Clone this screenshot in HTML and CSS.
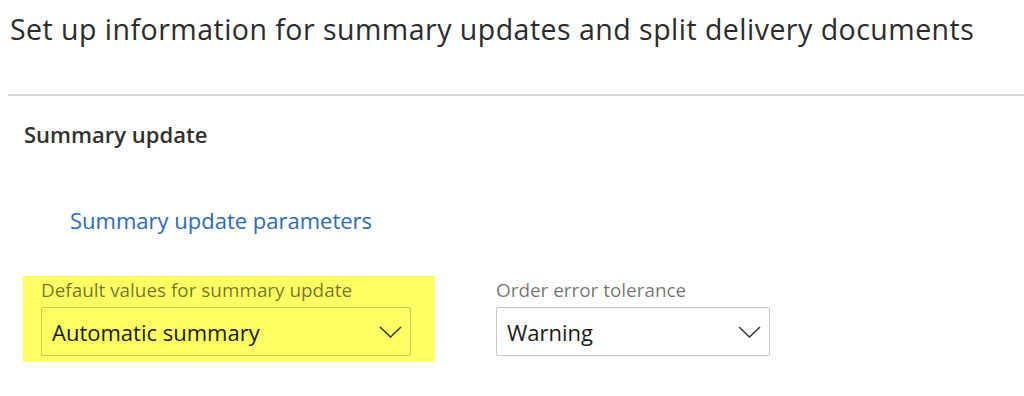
FILE: index.html
```html
<!DOCTYPE html>
<html lang="en">
<head>
<meta charset="utf-8">
<title>Summary update setup</title>
<link rel="stylesheet" href="styles.css">
</head>
<body>
<div class="page">
  <h1 class="title">Set up information for summary updates and split delivery documents</h1>
  <div class="rule"></div>
  <section class="section">
    <h2 class="section-title">Summary update</h2>
    <a class="link" href="#">Summary update parameters</a>
    <div class="fields">
      <div class="field highlight">
        <div class="label">Default values for summary update</div>
        <div class="select select-wide">
          <span class="value">Automatic summary</span>
          <svg class="chev" width="23" height="12" viewBox="0 0 23 12"><path d="M1 1 L11.5 11 L22 1" fill="none" stroke="currentColor" stroke-width="1.5"/></svg>
        </div>
      </div>
      <div class="field plain">
        <div class="label">Order error tolerance</div>
        <div class="select select-narrow">
          <span class="value">Warning</span>
          <svg class="chev" width="23" height="12" viewBox="0 0 23 12"><path d="M1 1 L11.5 11 L22 1" fill="none" stroke="currentColor" stroke-width="1.5"/></svg>
        </div>
      </div>
    </div>
  </section>
</div>
</body>
</html>
```
FILE: styles.css
```css
* { box-sizing: border-box; }
html, body { margin: 0; padding: 0; background: #ffffff; }
body {
  font-family: "Open Sans", "Noto Sans", "Liberation Sans", sans-serif;
  color: #323130;
}
.page { width: 1024px; height: 396px; overflow: hidden; }
.title {
  margin: 0;
  padding: 12px 0 0 10px;
  font-size: 28.5px;
  line-height: 34px;
  font-weight: 400;
  color: #2b2b2b;
  letter-spacing: 0.48px;
  white-space: nowrap;
}
.rule {
  margin: 48px 0 0 8px;
  height: 2px;
  background: #d6d6d6;
}
.section { padding-left: 24px; }
.section-title {
  margin: 0;
  padding-top: 24px;
  font-size: 22px;
  line-height: 28px;
  font-weight: 600;
  color: #323130;
}
.link {
  display: block;
  margin: 57px 0 0 46px;
  font-size: 22px;
  line-height: 30px;
  color: #2b6cb5;
  text-decoration: none;
  width: max-content;
}
.fields {
  display: flex;
  align-items: flex-start;
  margin-top: 41px;
  margin-left: -1px;
}
.field { display: flex; flex-direction: column; }
.highlight {
  background: #ffff63;
  width: 412px;
  height: 86px;
  padding: 2px 0 0 18px;
}
.plain {
  margin-left: 61px;
  padding-top: 2px;
}
.label {
  font-size: 18.9px;
  line-height: 24px;
  color: rgba(0, 0, 0, 0.56);
  height: 29px;
  white-space: nowrap;
}
.select {
  display: flex;
  align-items: center;
  justify-content: space-between;
  height: 49px;
  border: 1px solid rgba(0, 0, 0, 0.22);
  border-radius: 2px;
  padding: 0 8px 0 10px;
  color: #111111;
}
.select-wide { width: 370px; }
.select-narrow { width: 274px; }
.value {
  font-size: 22px;
  line-height: 28px;
  color: #1b1b1b;
}
.chev { color: #333333; display: block; }
```
